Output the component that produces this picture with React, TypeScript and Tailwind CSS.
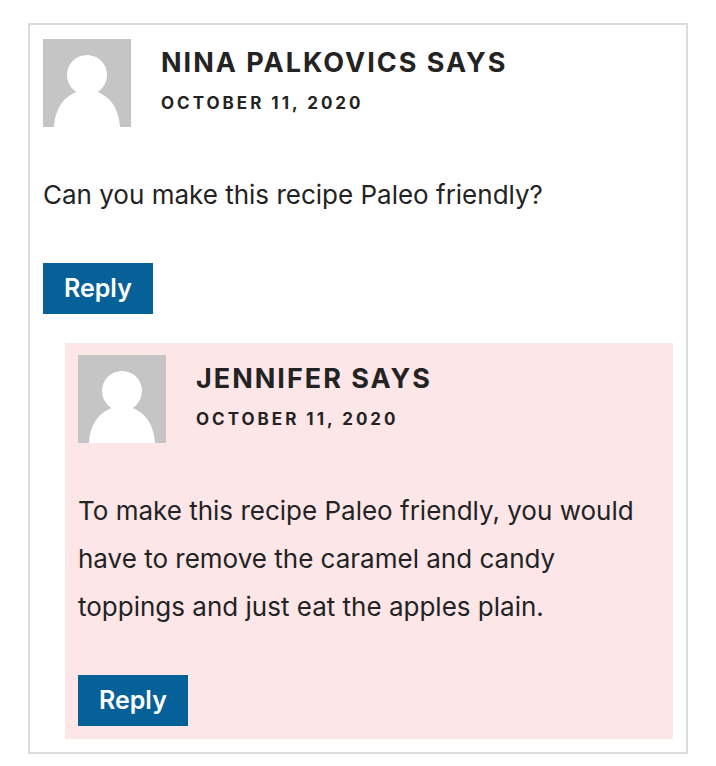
type CommentProps = {
  author: string
  date: string
  text: string
}

function Avatar() {
  return (
    <svg
      className="size-22 shrink-0"
      viewBox="0 0 88 88"
      role="img"
      aria-label="Avatar"
    >
      <rect width="88" height="88" fill="#c5c5c5" />
      <circle cx="44" cy="36" r="20" fill="#fff" />
      <path
        d="M11 88C12 70 21 57 34 53C36 52 35 50 35 50H53C53 50 52 52 54 53C67 57 76 70 77 88Z"
        fill="#fff"
      />
    </svg>
  )
}

function Comment({ author, date, text }: CommentProps) {
  return (
    <div>
      <header className="flex gap-[30px]">
        <Avatar />
        <div className="pt-1 font-bold uppercase">
          <h3 className="text-[27px] leading-10 tracking-[2px]">{author} says</h3>
          <p className="text-[17px] leading-10 tracking-[3px]">
            <time>{date}</time>
          </p>
        </div>
      </header>
      <p className="mt-11 text-[26px] leading-12">{text}</p>
      <button
        type="button"
        className="mt-11 h-[51px] bg-[#066199] px-[21px] text-[25px] font-semibold text-white"
      >
        Reply
      </button>
    </div>
  )
}

export default function App() {
  return (
    <main className="min-h-screen bg-white px-7 pt-[23px] pb-3 font-['Inter',sans-serif] text-[#232323]">
      <article className="border-2 border-[#dcdcde] p-[13px] pt-3.5">
        <Comment
          author="Nina Palkovics"
          date="October 11, 2020"
          text="Can you make this recipe Paleo friendly?"
        />
        <article className="mt-[29px] ml-[22px] bg-[#fce6e8] p-[13px] pt-3">
          <Comment
            author="Jennifer"
            date="October 11, 2020"
            text="To make this recipe Paleo friendly, you would have to remove the caramel and candy toppings and just eat the apples plain."
          />
        </article>
      </article>
    </main>
  )
}
